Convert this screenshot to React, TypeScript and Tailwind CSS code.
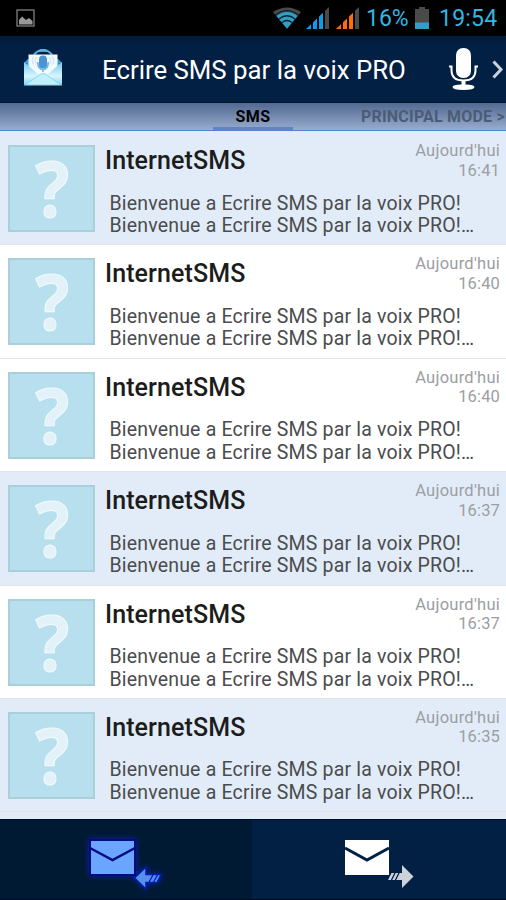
import { useState } from "react";

const messages = [
  { id: 1, time: "16:41", unread: true },
  { id: 2, time: "16:40", unread: false },
  { id: 3, time: "16:40", unread: false },
  { id: 4, time: "16:37", unread: true },
  { id: 5, time: "16:37", unread: false },
  { id: 6, time: "16:35", unread: true },
];

function SignalIcon({ color }: { color: string }) {
  return (
    <svg width="23" height="22" viewBox="0 0 23 22">
      <path d="M0 22L5 17.200V22z M7 22v-6.700l4-3.800V22z M13 22V9.500l4-3.800V22z" fill={color} />
      <path d="M19 22V3.800L23 0v22z" fill="#4a4a4a" />
    </svg>
  );
}

function StatusBar() {
  return (
    <div className="flex h-9 items-center bg-black text-[#33b5e5]">
      <svg className="ml-4" width="19" height="18" viewBox="0 0 19 18">
        <rect x="1" y="1" width="17" height="16" fill="none" stroke="#777" strokeWidth="1.400" />
        <path d="M3 15.500V11l3-3.500 4 3.500 3-2 3.500 3v3.500z" fill="#999" />
      </svg>
      <svg className="ml-[238px]" width="28" height="22" viewBox="0 0 28 22">
        <path d="M0 5Q14-4 28 5L14 22z" fill="#4a4a4a" />
        <path d="M3.500 9Q14 1 24.500 9L14 21.500z" fill="#2d9fc9" />
        <path d="M2.500 8Q14-.8 25.500 8M6 12Q14 5.500 22 12M9 15.500Q14 11.500 19 15.500" fill="none" stroke="#0c2029" strokeWidth="1.300" />
      </svg>
      <div className="ml-[5px] flex gap-[7px] pb-px">
        <SignalIcon color="#0c9ce5" />
        <SignalIcon color="#ff6c0d" />
      </div>
      <span className="ml-[7px] w-[49px] pt-0.5 text-[23px] whitespace-nowrap">16%</span>
      <svg className="mb-px" width="14" height="22" viewBox="0 0 14 22">
        <path d="M4 0h6v2h4v20H0V2h4z" fill="#4a4a4a" />
        <path d="M0 15.500h14V22H0z" fill="#2d9fc9" />
      </svg>
      <span className="ml-[10px] pt-0.5 text-[23px] tracking-[.2px]">19:54</span>
    </div>
  );
}

function AppLogo() {
  return (
    <svg width="38" height="38" viewBox="0 0 38 38">
      <defs>
        <linearGradient id="envelope" x1="0" y1="0" x2="0" y2="1">
          <stop offset="0" stopColor="#74c8ef" />
          <stop offset="0.600" stopColor="#d7f6fd" />
          <stop offset="1" stopColor="#7fd2f5" />
        </linearGradient>
      </defs>
      <path d="M0 14L12 3Q19-3 26 3L38 14v21q0 2-2 2H2q-2 0-2-2z" fill="#3aa0d2" />
      <path d="M0 14L12 3h14l12 11-4 1V6H4v9z" fill="#022044" />
      <path d="M0 14L4 10v5zM38 14l-4-4v5z" fill="#3aa0d2" />
      <path d="M10 5.500Q19-4 28 5.500" fill="none" stroke="#5fb4dc" strokeWidth="2" />
      <path d="M4.500 5.500h29V27h-29z" fill="#f3faff" />
      <path d="M9.500 7.500q-3 3.500 0 8M12.500 8q-3 3.500 0 7M28.500 7.500q3 3.500 0 8M25.500 8q3 3.500 0 7" fill="none" stroke="#c3dff0" />
      <path d="M13.800 13q0 7.500 5.200 7.500t5.200-7.500M19 20v3" fill="none" stroke="#6fb4de" strokeWidth="1.600" />
      <rect x="15" y="6.500" width="8" height="13" rx="4" fill="#4a94d4" />
      <path d="M0 13L15 26Q19 23.500 23 26L38 13v21.500q0 2-2 2H2q-2 0-2-2z" fill="url(#envelope)" />
      <path d="M1 36L14.500 26.500Q19 22.500 23.500 26.500L37 36z" fill="#bff0fb" stroke="#7fcdec" strokeWidth=".8" />
      <path d="M0 36.500h38" stroke="#218ac9" />
    </svg>
  );
}

function Header() {
  return (
    <header className="flex h-[67px] items-center border-b border-[#00132f] bg-[#022044] bg-linear-to-b from-[#011a38] to-[#022044] to-15% text-white">
      <div className="mb-0.5 ml-6">
        <AppLogo />
      </div>
      <h1 className="ml-10 w-[347px] pt-[3px] text-[25.800px] whitespace-nowrap">Ecrire SMS par la voix PRO</h1>
      <svg width="29" height="42" viewBox="0 0 29 42" fill="none">
        <rect x="7" y="0" width="15" height="30" rx="7" fill="#fff" />
        <path d="M0 18.500h2.500V22q0 10.500 12 10.500T26.500 22v-3.500H29" stroke="#fff" strokeWidth="2" />
        <path d="M12.500 32h4v4.500q9 .2 9 2.500 0 3-11 3t-11-3q0-2.300 9-2.500z" fill="#fff" />
      </svg>
      <svg className="ml-[14px] shrink-0" width="12" height="19" viewBox="0 0 12 19">
        <path d="M1.500 1.500L9 9.500 1.500 17.500" fill="none" stroke="#c9d2dc" strokeWidth="3" />
      </svg>
    </header>
  );
}

function Tabs() {
  return (
    <nav className="flex h-[28px] border-b border-[#5584c4] bg-linear-to-b from-[#526a90] to-[#98add0] text-[16px] leading-[27px] font-bold">
      <div className="ml-[213px] w-[80px] border-b-[3px] border-[#6086c1] text-center tracking-[.4px] text-black">SMS</div>
      <div className="ml-[68px] tracking-[.2px] whitespace-nowrap text-[#4c5c76]">PRINCIPAL MODE &gt;</div>
    </nav>
  );
}

function Avatar() {
  return (
    <svg className="mt-[13px] ml-[7.500px] shrink-0 overflow-visible" width="87" height="87" viewBox="0 0 87 87">
      <rect x="1" y="1" width="85" height="85" fill="#b8dfed" stroke="#a9cfdb" strokeWidth="2" />
      <text
        transform="translate(44.500 72) scale(.92 1)"
        textAnchor="middle"
        fontSize="77"
        fontFamily="Open Sans, sans-serif"
        fontWeight="700"
        fill="#e2f2f8"
        stroke="#eff9fc"
        strokeWidth="1.200"
      >
        ?
      </text>
    </svg>
  );
}

function MessageRow({ time, unread }: { time: string; unread: boolean }) {
  return (
    <li className={`flex h-[113.400px] border-b border-[#e2e4e8] ${unread ? "bg-[#e2ecf8]" : "bg-white"}`}>
      <Avatar />
      <div className="ml-[10.500px] min-w-0 flex-1">
        <div className="flex justify-between pr-[6px]">
          <h2 className="pt-[13px] text-[25px] leading-[32px] font-medium tracking-[.1px] text-[#1c1c1c]">InternetSMS</h2>
          <div className="pt-[9px] text-right text-[16.500px] leading-[19.500px] text-[#9b9ea3]">
            <div className="tracking-[.25px]">Aujourd'hui</div>
            <div className="tracking-[.15px]">{time}</div>
          </div>
        </div>
        <p className="mt-[12.500px] ml-[4.500px] text-[19.500px] leading-[22.500px] tracking-[.18px] whitespace-nowrap text-[#4b4c4e]">
          Bienvenue a Ecrire SMS par la voix PRO!
          <br />
          Bienvenue a Ecrire SMS par la voix PRO!…
        </p>
      </div>
    </li>
  );
}

function InboxIcon() {
  return (
    <svg className="overflow-visible drop-shadow-[0_0_3px_#0b22a8]" width="80" height="56" viewBox="0 0 80 56">
      <path d="M4 4h45v35H4z" fill="#6aa6ff" stroke="#000a85" strokeWidth="2" />
      <path d="M4 12l22.500 12L49 12" fill="none" stroke="#000a85" strokeWidth="2.500" />
      <path d="M48.500 42L60 31v7.500h15l-4 8H60V53z" fill="#578fec" stroke="#061cb0" strokeWidth="1.500" />
      <path d="M62.500 47l5-9M67 47l5-9" stroke="#061cb0" strokeWidth="1.300" />
    </svg>
  );
}

function OutboxIcon() {
  return (
    <svg width="80" height="56" viewBox="0 0 80 56">
      <path d="M4 4h44v35H4z" fill="#fff" />
      <path d="M4 12l22 12 22-12" fill="none" stroke="#022044" strokeWidth="3" />
      <path d="M47 44l3.500-7H61v-8l11.500 11.500L61 52v-8z" fill="#ccd2da" />
      <path d="M50 45l4.500-9M54 45l4.500-9" stroke="#022044" strokeWidth="1.300" />
    </svg>
  );
}

export default function App() {
  const [box, setBox] = useState("inbox");

  return (
    <div className="flex h-[900px] w-[506px] flex-col overflow-hidden bg-[#e2ecf8] font-[Roboto,sans-serif]">
      <StatusBar />
      <Header />
      <Tabs />
      <ul className="flex-1 pt-px">
        {messages.map((m) => (
          <MessageRow key={m.id} time={m.time} unread={m.unread} />
        ))}
      </ul>
      <footer className="flex h-[81px] shrink-0 border-y border-[#000a20]">
        <button
          onClick={() => setBox("inbox")}
          className={`flex w-[252px] pt-[16px] pl-[86px] ${box === "inbox" ? "bg-[#001a34]" : "bg-[#022044]"}`}
        >
          <InboxIcon />
        </button>
        <button
          onClick={() => setBox("outbox")}
          className={`flex flex-1 pt-[16px] pl-[89px] ${box === "outbox" ? "bg-[#001a34]" : "bg-[#022044]"}`}
        >
          <OutboxIcon />
        </button>
      </footer>
    </div>
  );
}
